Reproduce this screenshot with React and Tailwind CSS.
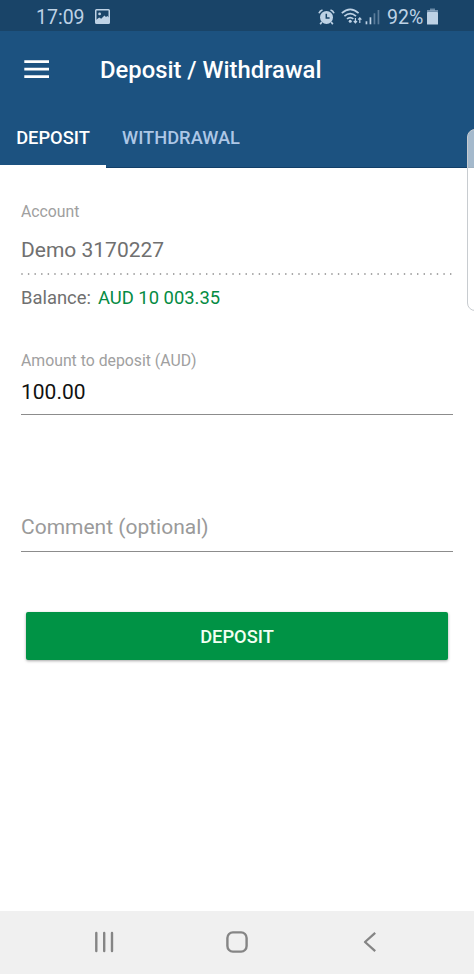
import React from "react";

function StatusBar() {
  return (
    <div className="flex h-[31px] items-center bg-[#194468] text-[#bed2e5]">
      <span className="ml-[36px] w-[49px] whitespace-nowrap text-[19.5px] leading-[31px] pt-[3px]">17:09</span>
      <svg className="ml-[10px] mt-[2px]" width="15" height="15" viewBox="0 0 15 15" fill="none">
        <rect x="0.75" y="0.75" width="13.5" height="13.5" rx="0.8" stroke="currentColor" strokeWidth="1.5" />
        <circle cx="4.6" cy="4.9" r="1.4" fill="currentColor" />
        <path d="M1 11 L4.2 8.6 L6.2 9.8 L9.5 6.6 L11 8 L12.3 7 L14 8.5 V14 H1 Z" fill="currentColor" />
      </svg>
      <svg className="ml-[208px] mt-[2px]" width="17" height="16" viewBox="0 0 17 16" fill="none" stroke="currentColor">
        <circle cx="8.5" cy="8.4" r="6.5" fill="currentColor" stroke="none" />
        <path d="M1 4.2 Q2 1.7 4.5 1 M12.5 1 Q15 1.7 16 4.2" strokeWidth="1.7" />
        <path d="M3.8 13 L2.2 15.2 M13.2 13 L14.8 15.2" strokeWidth="1.7" />
        <path d="M8.3 4.7 V9 H11.6" stroke="#194468" strokeWidth="1.5" />
      </svg>
      <svg className="ml-[6px] mt-[2px]" width="22" height="17" viewBox="0 0 22 17" fill="none" stroke="currentColor" strokeWidth="1.7">
        <path d="M0.8 5.2 Q9.2 -2.4 17.6 5.2 M3.4 8.1 Q9.2 3 15 8.1 M6 10.9 Q9.2 8.2 12.4 10.9" />
        <circle cx="9.2" cy="13.2" r="1.5" fill="currentColor" stroke="none" />
        <path d="M14.4 10 V14.5 M12.8 13 L14.4 14.8 L16 13" strokeWidth="1.2" />
        <path d="M18.8 15 V10.2 M17.2 11.6 L18.8 9.8 L20.4 11.6" strokeWidth="1.2" />
      </svg>
      <svg className="ml-[2px] mt-[2px]" width="15" height="16" viewBox="0 0 15 16" fill="currentColor">
        <rect x="0.6" y="12.3" width="1.7" height="3" />
        <rect x="4.6" y="8.3" width="1.7" height="7" />
        <rect x="8.6" y="4.3" width="1.7" height="11" opacity="0.4" />
        <rect x="12.6" y="1" width="1.7" height="14.3" opacity="0.4" />
      </svg>
      <span className="ml-[7px] w-[36px] whitespace-nowrap text-[19.5px] leading-[31px] pt-[3px]">92%</span>
      <svg className="ml-[4px] mt-[2px]" width="11" height="17" viewBox="0 0 11 17" fill="currentColor">
        <rect x="3" y="0.5" width="5" height="2" opacity="0.5" />
        <rect x="0" y="2" width="11" height="2" opacity="0.55" />
        <rect x="0" y="4" width="11" height="12.6" rx="0.6" />
      </svg>
    </div>
  );
}

function AppHeader() {
  return (
    <header className="flex h-[137px] flex-col border-b border-[#123f68] bg-[#1c5280]">
      <div className="flex h-[77px] items-center">
        <button className="ml-[24px]" aria-label="Menu">
          <svg className="-mt-px block" width="25" height="19" viewBox="0 0 25 19" stroke="white" strokeWidth="2.7">
            <path d="M0.3 1.7 H25 M0.3 9.2 H25 M0.3 16.6 H25" />
          </svg>
        </button>
        <h1 className="ml-[51px] whitespace-nowrap pt-[2px] text-[23.8px] font-medium leading-[77px] text-white">Deposit / Withdrawal</h1>
      </div>
      <nav className="-mb-px flex h-[60px] text-[18.3px] font-medium">
        <button className="flex w-[106px] items-center justify-center border-b-[3px] border-white pt-[2px] text-white">DEPOSIT</button>
        <button className="flex w-[150px] items-center justify-center border-b-[3px] border-transparent pt-[2px] text-[#adc7e6]">WITHDRAWAL</button>
      </nav>
    </header>
  );
}

function DottedRule() {
  return (
    <svg className="block" width="432" height="2" viewBox="0 0 432 2">
      <line x1="0.3" y1="1" x2="432" y2="1" stroke="#8c8c8c" strokeWidth="1.4" strokeDasharray="1.4 5.195" />
    </svg>
  );
}

function DepositForm() {
  return (
    <main className="flex h-[743px] flex-col bg-white px-[21px] pt-[32px]">
      <div className="h-[24px] text-[15.8px] leading-[24px] text-[#a0a0a0]">Account</div>
      <div className="mt-[12px] h-[28px] text-[21px] leading-[28px] text-[#707070]">Demo 3170227</div>
      <div className="mt-[9px]"><DottedRule /></div>
      <div className="mt-[10px] flex h-[26px] gap-[7px] text-[18.4px] leading-[26px] text-[#707070]">
        <span>Balance:</span>
        <span className="text-[#058b43]">AUD 10 003.35</span>
      </div>
      <div className="mt-[38px] h-[24px] text-[15.8px] leading-[24px] text-[#a0a0a0]">Amount to deposit (AUD)</div>
      <div className="mt-[5px] h-[28px] text-[21px] leading-[28px] text-[#111111]">100.00</div>
      <div className="mt-[8px] h-px bg-[#8c8c8c]" />
      <div className="mt-[98px] h-[28px] text-[21px] leading-[28px] text-[#9a9a9a]">Comment (optional)</div>
      <div className="mt-[10px] h-px bg-[#8c8c8c]" />
      <button className="mx-[5px] mt-[60px] h-[48px] rounded-[2px] bg-[#009345] pt-[2px] text-[18.3px] font-medium text-[#f2fff2] shadow-[0_1px_3px_rgba(0,0,0,0.35)]">DEPOSIT</button>
    </main>
  );
}

function NavigationBar() {
  return (
    <footer className="grid h-[63px] grid-cols-[208px_58px_208px] items-center bg-[#f0f0f0] pb-[2px] text-[#858585]">
      <svg className="mx-auto" width="20" height="22" viewBox="0 0 20 22" fill="none" stroke="currentColor" strokeWidth="2.4" strokeLinecap="round">
        <path d="M2.3 2 V20 M10.2 2 V20 M18 2 V20" />
      </svg>
      <svg className="mx-auto" width="22" height="22" viewBox="0 0 22 22" fill="none" stroke="currentColor" strokeWidth="2.4">
        <rect x="1.4" y="1.4" width="19.2" height="19.2" rx="5.5" />
      </svg>
      <svg className="mx-auto" width="14" height="22" viewBox="0 0 14 22" fill="none" stroke="currentColor" strokeWidth="2.3" strokeLinejoin="round">
        <path d="M12.2 1.8 L2 11 L12.2 20.2" />
      </svg>
    </footer>
  );
}

export default function App() {
  return (
    <div className="relative h-[974px] w-[474px] overflow-hidden bg-white font-['Roboto',sans-serif]">
      <StatusBar />
      <AppHeader />
      <DepositForm />
      <NavigationBar />
      <div className="absolute -right-[10px] top-[129px] h-[182px] w-[17px] rounded-[8px] border border-[#c8ccd0] bg-white/60" />
    </div>
  );
}
